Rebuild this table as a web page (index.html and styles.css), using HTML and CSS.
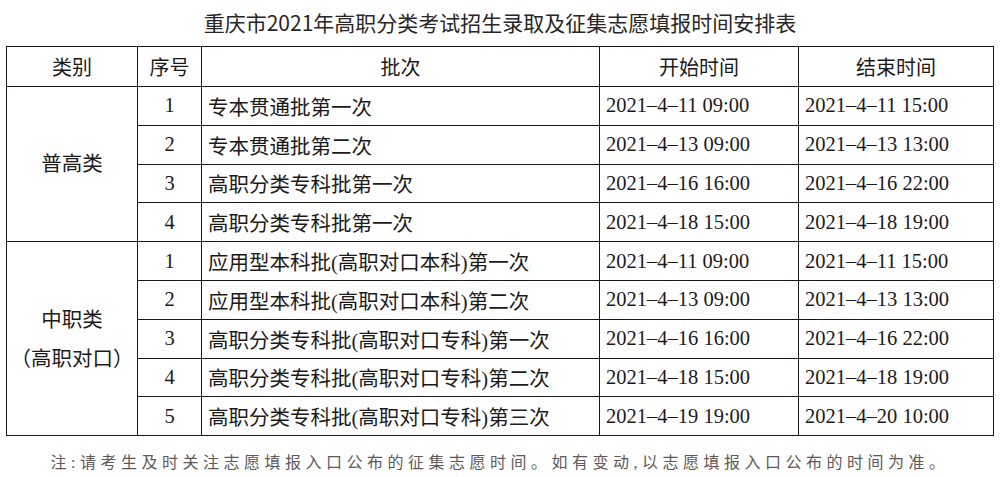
FILE: index.html
```html
<!DOCTYPE html>
<html lang="zh-CN">
<head>
<meta charset="utf-8">
<title>重庆市2021年高职分类考试招生录取及征集志愿填报时间安排表</title>
<link rel="stylesheet" href="styles.css">
</head>
<body>
<div class="page">
  <h1 class="title">重庆市2021年高职分类考试招生录取及征集志愿填报时间安排表</h1>
  <div class="table">
    <div class="cell head">类别</div>
    <div class="cell head">序号</div>
    <div class="cell head">批次</div>
    <div class="cell head">开始时间</div>
    <div class="cell head">结束时间</div>

    <div class="cell cat cat-a">普高类</div>
    <div class="cell num">1</div>
    <div class="cell txt">专本贯通批第一次</div>
    <div class="cell txt">2021–4–11 09:00</div>
    <div class="cell txt">2021–4–11 15:00</div>

    <div class="cell num">2</div>
    <div class="cell txt">专本贯通批第二次</div>
    <div class="cell txt">2021–4–13 09:00</div>
    <div class="cell txt">2021–4–13 13:00</div>

    <div class="cell num">3</div>
    <div class="cell txt">高职分类专科批第一次</div>
    <div class="cell txt">2021–4–16 16:00</div>
    <div class="cell txt">2021–4–16 22:00</div>

    <div class="cell num">4</div>
    <div class="cell txt">高职分类专科批第一次</div>
    <div class="cell txt">2021–4–18 15:00</div>
    <div class="cell txt">2021–4–18 19:00</div>

    <div class="cell cat cat-b"><span>中职类</span><span class="paren">（高职对口）</span></div>
    <div class="cell num">1</div>
    <div class="cell txt">应用型本科批(高职对口本科)第一次</div>
    <div class="cell txt">2021–4–11 09:00</div>
    <div class="cell txt">2021–4–11 15:00</div>

    <div class="cell num">2</div>
    <div class="cell txt">应用型本科批(高职对口本科)第二次</div>
    <div class="cell txt">2021–4–13 09:00</div>
    <div class="cell txt">2021–4–13 13:00</div>

    <div class="cell num">3</div>
    <div class="cell txt">高职分类专科批(高职对口专科)第一次</div>
    <div class="cell txt">2021–4–16 16:00</div>
    <div class="cell txt">2021–4–16 22:00</div>

    <div class="cell num">4</div>
    <div class="cell txt">高职分类专科批(高职对口专科)第二次</div>
    <div class="cell txt">2021–4–18 15:00</div>
    <div class="cell txt">2021–4–18 19:00</div>

    <div class="cell num">5</div>
    <div class="cell txt">高职分类专科批(高职对口专科)第三次</div>
    <div class="cell txt">2021–4–19 19:00</div>
    <div class="cell txt">2021–4–20 10:00</div>
  </div>
  <p class="note">注:请考生及时关注志愿填报入口公布的征集志愿时间。如有变动,以志愿填报入口公布的时间为准。</p>
</div>
</body>
</html>
```

FILE: styles.css
```css
html, body {
  margin: 0;
  padding: 0;
  background: #ffffff;
  overflow: hidden;
}

.page {
  width: 1000px;
  height: 477px;
  color: #1c1a19;
  font-family: "Liberation Serif", "Noto Sans CJK SC", serif;
}

.title {
  margin: 0;
  height: 46px;
  line-height: 45px;
  text-align: center;
  font-family: "Noto Sans CJK SC", "Noto Sans", sans-serif;
  font-size: 21px;
  font-weight: 400;
  color: #2a2625;
}

.title-num {
  letter-spacing: 0.5px;
}

.table {
  margin-left: 6px;
  width: 988px;
  box-sizing: border-box;
  display: grid;
  grid-template-columns: 130px 63px 397px 198px 194px;
  grid-template-rows: 39px repeat(9, 37.8px);
  gap: 1px;
  padding: 1px;
  background: #1a1716;
}

.cell {
  background: #ffffff;
  display: flex;
  align-items: center;
  font-size: 20.5px;
  white-space: nowrap;
}

.head {
  justify-content: center;
  font-size: 20px;
}

.num {
  justify-content: center;
}

.txt {
  padding-left: 6px;
}

.cat {
  justify-content: center;
  flex-direction: column;
  line-height: 37px;
}

.cat-a {
  grid-row: span 4;
}

.cat-b {
  grid-row: span 5;
}

.paren {
  font-feature-settings: "halt";
  font-family: "Noto Sans CJK SC", sans-serif;
}

.note {
  margin: 15px 0 0;
  line-height: 24px;
  text-align: center;
  font-family: "Liberation Serif", "Noto Sans CJK SC", serif;
  font-size: 16px;
  letter-spacing: 4.5px;
  color: #5f5a57;
}
```
